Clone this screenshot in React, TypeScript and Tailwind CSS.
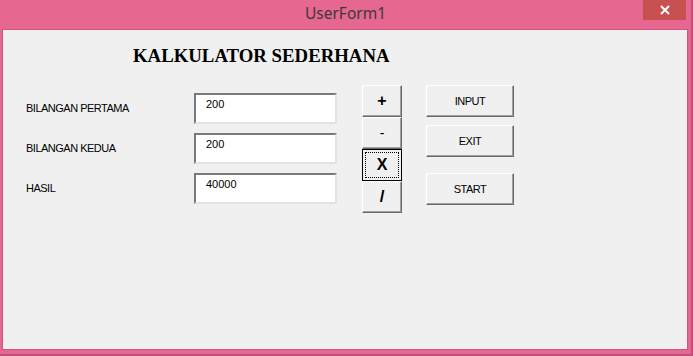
import React, { useState } from "react";

const label = "text-[11px] tracking-[-0.5px] text-black";
const raised =
  "border border-t-white border-l-white border-r-[#696969] border-b-[#696969] shadow-[inset_-1px_-1px_0_#a0a0a0] bg-[#f0f0f0] flex items-center justify-center";

function Field({ name, value }: { name: string; value: string }) {
  return (
    <div className="flex items-center h-[31px]">
      <div className={`w-[168px] ${label}`}>{name}</div>
      <div className="w-[143px] h-[31px] bg-white border-2 border-t-[#7a7a7a] border-l-[#7a7a7a] border-r-[#e3e3e3] border-b-[#e3e3e3] pl-[10px] pt-[3px] text-[11px] leading-[13px] text-black">
        {value}
      </div>
    </div>
  );
}

export default function App() {
  const [a] = useState("200");
  const [b] = useState("200");
  const [hasil] = useState("40000");

  return (
    <div
      className="w-full h-screen bg-[#e6678f] flex flex-col border-r-2 border-b-2 border-r-[#c24f77] border-b-[#c24f77]"
      style={{ fontFamily: '"Liberation Sans", Arial, sans-serif' }}
    >
      {/* title bar */}
      <div className="h-[29px] relative flex items-start justify-center shrink-0">
        <div
          className="mt-[2px] text-[15.5px] text-[#3a3a3a]"
          style={{ fontFamily: '"Noto Sans", "Open Sans", sans-serif' }}
        >
          UserForm1
        </div>
        <div className="absolute right-[5px] top-0 w-[43px] h-[20px] bg-[#c75050] flex items-center justify-center">
          <svg width="10" height="10" viewBox="0 0 10 10">
            <path d="M1 1 L9 9 M9 1 L1 9" stroke="white" strokeWidth="2" />
          </svg>
        </div>
      </div>

      {/* form body */}
      <div className="flex-1 ml-[2px] mr-[3px] mb-[4px] bg-[#f0f0f0] border border-[#c9577f]">
        <h1
          className="ml-[130px] mt-[16px] text-[18.8px] leading-[20px] font-bold text-black"
          style={{ fontFamily: '"Liberation Serif", "Times New Roman", serif' }}
        >
          KALKULATOR SEDERHANA
        </h1>

        <div className="flex items-start mt-[19px]">
          <div className="pl-[23px] pt-[8px] flex flex-col gap-[9px]">
            <Field name="BILANGAN PERTAMA" value={a} />
            <Field name="BILANGAN KEDUA" value={b} />
            <Field name="HASIL" value={hasil} />
          </div>

          <div className="ml-[25px] flex flex-col w-[40px]">
            <button className={`h-[32px] ${raised} text-[16px] font-bold`}>+</button>
            <button className={`h-[32px] ${raised} text-[14px]`}>-</button>
            <button className="h-[32px] border border-black bg-[#f0f0f0] p-[2px]">
              <div className="w-full h-full border border-dotted border-black flex items-center justify-center text-[16px] font-bold">
                X
              </div>
            </button>
            <button className={`h-[32px] ${raised} text-[17px] font-bold`}>/</button>
          </div>

          <div className="ml-[24px] flex flex-col w-[88px]">
            <button className={`h-[32px] ${raised} ${label}`}>INPUT</button>
            <button className={`h-[32px] mt-[8px] ${raised} ${label}`}>EXIT</button>
            <button className={`h-[32px] mt-[16px] ${raised} ${label}`}>START</button>
          </div>
        </div>
      </div>
    </div>
  );
}
